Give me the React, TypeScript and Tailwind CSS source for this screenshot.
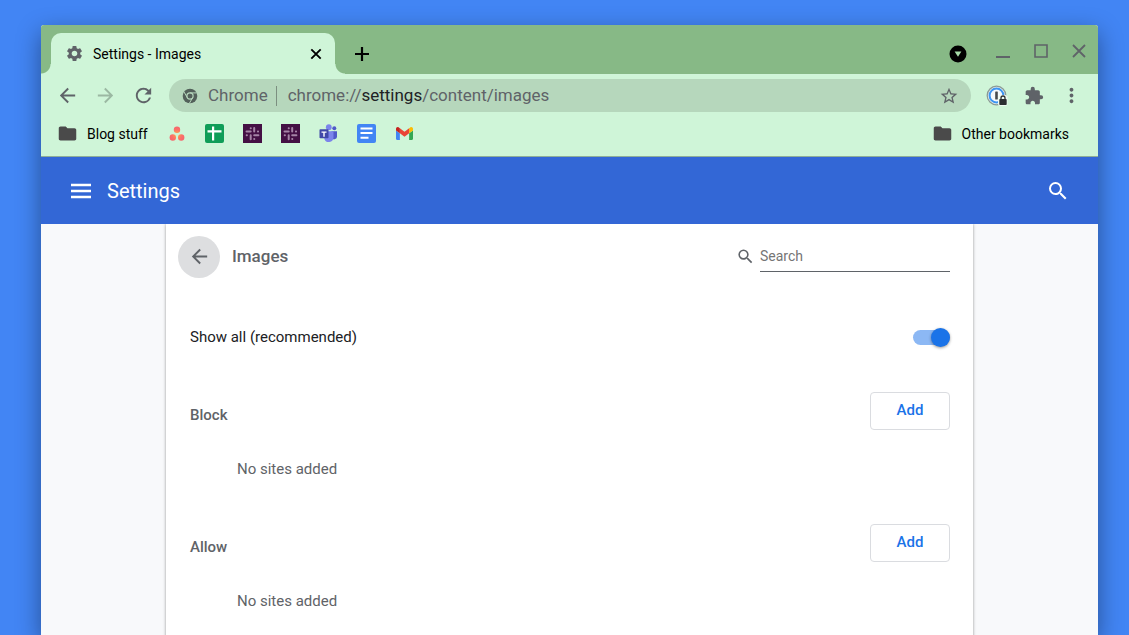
import type { ReactNode } from 'react';
import {
  MdArrowBack,
  MdArrowForward,
  MdExtension,
  MdFolder,
  MdMenu,
  MdMoreVert,
  MdRefresh,
  MdSearch,
  MdSettings,
  MdStarBorder,
} from 'react-icons/md';

function AsanaIcon() {
  return (
    <svg viewBox="0 0 16 16" className="size-4">
      <defs>
        <radialGradient id="asana" gradientUnits="userSpaceOnUse" cx="8" cy="8.5" r="8.5">
          <stop offset="0" stopColor="#ffb040" />
          <stop offset="0.55" stopColor="#fb7268" />
          <stop offset="1" stopColor="#f5636e" />
        </radialGradient>
      </defs>
      <g fill="url(#asana)">
        <circle cx="8" cy="3.800" r="3.2" />
        <circle cx="3.800" cy="11.500" r="3.2" />
        <circle cx="12.200" cy="11.500" r="3.2" />
      </g>
    </svg>
  );
}

function SheetsIcon() {
  return (
    <svg viewBox="0 0 19 19" className="size-[19px]">
      <rect width="19" height="19" rx="2" fill="#0f9d58" />
      <path d="M7 2.5h2.2v3.8H16.5v2.2H9.200v8H7v-8H2.500V6.300H7z" fill="#fff" />
    </svg>
  );
}

function SlackIcon() {
  return (
    <svg viewBox="0 0 19 19" className="size-[19px]">
      <rect width="19" height="19" fill="#441044" />
      <g stroke="#a584a6" strokeWidth="2" strokeLinecap="round">
        <path d="M7.700 4.200h.1M3.500 7.600h4.200" />
        <path d="M11.200 3.900v3.700M14.900 7.600h.2" />
        <path d="M11.200 11.300h4.200M11.200 15h.1" />
        <path d="M7.700 11.300v3.900M3.700 11.300h.2" />
      </g>
    </svg>
  );
}

function TeamsIcon() {
  return (
    <svg viewBox="0 0 19 19" className="size-[19px]">
      <circle cx="15.300" cy="4.300" r="2" fill="#5059c9" />
      <path d="M12.500 7.200H18v5.200a3 3 0 0 1-5 2.200z" fill="#5059c9" />
      <circle cx="9.800" cy="3.200" r="2.900" fill="#7b83eb" />
      <path d="M6 7.200h8.500v6.300a4.700 4.700 0 0 1-9.200 1.200z" fill="#7b83eb" />
      <rect x="0.500" y="5.300" width="9" height="9" rx="0.800" fill="#4048a8" />
      <path d="M2.500 7.400h5v1.400H5.700v4H4.300v-4H2.500z" fill="#fff" />
    </svg>
  );
}

function DocsIcon() {
  return (
    <svg viewBox="0 0 19 19" className="size-[19px]">
      <rect width="19" height="19" rx="2" fill="#4285f4" />
      <path d="M3.500 3.500h12v2h-12zM3.500 8h12v2h-12zM3.500 12.800h8v2h-8z" fill="#fff" />
    </svg>
  );
}

function GmailIcon() {
  return (
    <svg viewBox="52 42 88 66" className="h-[13px] w-[17px]">
      <path fill="#4285f4" d="M58 108h14V74L52 59v43c0 3.320 2.690 6 6 6" />
      <path fill="#34a853" d="M120 108h14c3.320 0 6-2.690 6-6V59l-20 15" />
      <path fill="#fbbc04" d="M120 48v26l20-15v-8c0-7.420-8.470-11.650-14.400-7.200" />
      <path fill="#ea4335" d="M72 74V48l24 18 24-18v26L96 92" />
      <path fill="#c5221f" d="M52 51v8l20 15V48l-5.600-4.200c-5.940-4.450-14.400-.22-14.400 7.200" />
    </svg>
  );
}

function ChromeIcon() {
  return (
    <svg viewBox="0 0 16 16" className="size-4">
      <circle cx="8" cy="8" r="7.300" fill="#53605a" />
      <g stroke="#b6d7bc" fill="none">
        <circle cx="8" cy="8" r="3.100" strokeWidth="1.200" />
        <path d="M8 4.900h6.800M5.300 9.600L1.900 3.700M10.700 9.600L7.300 15.400" strokeWidth="1" />
      </g>
    </svg>
  );
}

function PasswordIcon() {
  return (
    <svg viewBox="0 0 22 22" className="size-[22px] shrink-0">
      <circle cx="10.500" cy="10.500" r="9.300" fill="#e8f3ee" stroke="#8c9b96" strokeWidth="1.300" />
      <circle cx="10.500" cy="10.500" r="6.900" fill="#f4f8fb" stroke="#3e96f3" strokeWidth="2" />
      <rect x="9.200" y="6.500" width="2.600" height="8" rx="0.600" fill="#46494d" />
      <rect x="12" y="10" width="9.500" height="11" rx="2.500" fill="#eefaf1" />
      <rect x="13.300" y="14" width="7.400" height="6" rx="0.800" fill="#2b2e31" />
      <path d="M15 14.500v-1.500a2 2 0 0 1 4 0v1.500" fill="none" stroke="#2b2e31" strokeWidth="1.300" />
    </svg>
  );
}

function IconButton({ label, children }: { label: string; children: ReactNode }) {
  return (
    <button type="button" aria-label={label} className="flex size-6 items-center justify-center">
      {children}
    </button>
  );
}

function TitleBar() {
  return (
    <div className="flex h-[49px] shrink-0 items-end bg-[#87b986] pl-2.5">
      <div className="relative flex h-[41px] w-[284px] items-center rounded-t-[10px] bg-[#cff5d8] pr-[7px] pl-[14px]">
        <span className="absolute bottom-0 -left-2.5 size-2.5 bg-[radial-gradient(circle_at_0_0,transparent_9px,#cff5d8_10px)]" />
        <span className="absolute -right-2.5 bottom-0 size-2.5 bg-[radial-gradient(circle_at_100%_0,transparent_9px,#cff5d8_10px)]" />
        <MdSettings className="size-[19px] text-[#5f6368]" />
        <span className="ml-[9px] flex-1 text-sm text-black">Settings - Images</span>
        <IconButton label="Close tab">
          <svg viewBox="0 0 12 12" className="size-3">
            <path d="M1.300 1.300l9.400 9.400M10.700 1.300L1.300 10.700" stroke="#000" strokeWidth="1.900" />
          </svg>
        </IconButton>
      </div>
      <div className="flex h-[41px] flex-1 items-center pr-[7px] pl-[15px]">
        <IconButton label="New tab">
          <svg viewBox="0 0 16 16" className="size-4">
            <path d="M8 1v14M1 8h14" stroke="#000" strokeWidth="2.200" />
          </svg>
        </IconButton>
        <div className="flex-1" />
        <IconButton label="Search tabs">
          <svg viewBox="0 0 18 18" className="size-[18px]">
            <circle cx="9" cy="9" r="8.500" />
            <path d="M5.600 6.600h6.800L9 11.800z" fill="#a6dca7" />
          </svg>
        </IconButton>
        <div className="mb-1.5 ml-[21px] flex gap-3.5 text-[#5f6368]">
          <IconButton label="Minimize">
            <svg viewBox="0 0 14 14" className="size-3.5">
              <path d="M0 13h14" stroke="currentColor" strokeWidth="2" />
            </svg>
          </IconButton>
          <IconButton label="Maximize">
            <svg viewBox="0 0 14 14" className="size-3.5">
              <path d="M1 1h12v12H1z" fill="none" stroke="currentColor" strokeWidth="1.600" />
            </svg>
          </IconButton>
          <IconButton label="Close window">
            <svg viewBox="0 0 14 14" className="size-3.5">
              <path d="M1 1l12 12M13 1L1 13" stroke="currentColor" strokeWidth="1.800" />
            </svg>
          </IconButton>
        </div>
      </div>
    </div>
  );
}

function Toolbar() {
  return (
    <div className="flex h-[43px] items-center pr-[15px] pl-3.5 text-[#5f6368]">
      <div className="flex gap-3.5">
        <IconButton label="Back">
          <MdArrowBack className="size-[23px]" />
        </IconButton>
        <IconButton label="Forward">
          <MdArrowForward className="size-[23px] text-[#9bb8a2]" />
        </IconButton>
        <IconButton label="Reload">
          <MdRefresh className="size-[23px]" />
        </IconButton>
      </div>
      <div className="ml-[14px] flex h-[33px] flex-1 items-center rounded-full bg-[#b6d7bc] pr-2.5 pl-[13px] text-[17px]">
        <ChromeIcon />
        <span className="ml-2.5">Chrome</span>
        <span className="mr-[11px] ml-2 h-5 w-px bg-[#7c8f80]" />
        <span className="flex-1">
          chrome://<span className="text-[#202124]">settings</span>/content/images
        </span>
        <IconButton label="Bookmark this page">
          <MdStarBorder className="size-5" />
        </IconButton>
      </div>
      <div className="ml-3.5 flex gap-[13px]">
        <IconButton label="Password manager">
          <PasswordIcon />
        </IconButton>
        <IconButton label="Extensions">
          <MdExtension className="size-5" />
        </IconButton>
        <IconButton label="More">
          <MdMoreVert className="size-[23px]" />
        </IconButton>
      </div>
    </div>
  );
}

const bookmarks = [
  { label: 'Asana', icon: <AsanaIcon /> },
  { label: 'Sheets', icon: <SheetsIcon /> },
  { label: 'Slack', icon: <SlackIcon /> },
  { label: 'Slack team', icon: <SlackIcon /> },
  { label: 'Teams', icon: <TeamsIcon /> },
  { label: 'Docs', icon: <DocsIcon /> },
  { label: 'Gmail', icon: <GmailIcon /> },
];

function FolderButton({ name }: { name: string }) {
  return (
    <button type="button" className="flex items-center gap-[9px] text-sm text-black">
      <MdFolder className="size-[21px] text-[#4a4a4a]" />
      {name}
    </button>
  );
}

function BookmarksBar() {
  return (
    <div className="flex h-10 items-center border-b border-[#8fae97] pr-[29px] pb-1.5 pl-4">
      <FolderButton name="Blog stuff" />
      <div className="ml-[17px] flex flex-1 gap-3.5">
        {bookmarks.map((b) => (
          <a key={b.label} href="#" aria-label={b.label} className="flex size-6 items-center justify-center">
            {b.icon}
          </a>
        ))}
      </div>
      <FolderButton name="Other bookmarks" />
    </div>
  );
}

function SiteSection({ title }: { title: string }) {
  return (
    <section className="mb-10">
      <div className="flex h-[38px] items-center justify-between">
        <h2 className="pt-2 text-[15px] font-medium text-[#5f6368]">{title}</h2>
        <button
          type="button"
          className="h-[38px] w-20 rounded border border-[#dadce0] pb-0.5 text-[15px] font-medium text-[#1a73e8]"
        >
          Add
        </button>
      </div>
      <p className="mt-6 pl-[47px] text-[15px] leading-[30px] text-[#5f6368]">No sites added</p>
    </section>
  );
}

function ImagesPage() {
  return (
    <div className="mx-[125px] flex-1 bg-white pr-[23px] pl-6 shadow-[0_0_3px_rgba(0,0,0,0.4)]">
      <div className="-ml-3 flex h-[65px] items-center">
        <button
          type="button"
          aria-label="Back"
          className="flex size-[42px] items-center justify-center rounded-full bg-[#dddee0] text-[#5f6368]"
        >
          <MdArrowBack className="size-[23px]" />
        </button>
        <h1 className="ml-3 flex-1 text-[17px] font-medium text-[#5f6368]">Images</h1>
        <label className="flex items-center text-[#5f6368]">
          <MdSearch className="mr-[5px] size-[19px]" />
          <input
            type="search"
            aria-label="Search"
            placeholder="Search"
            className="h-[30px] w-[190px] border-b border-[#5f6368] bg-transparent text-sm outline-none placeholder:text-[#757575]"
          />
        </label>
      </div>
      <label className="mt-8 mb-[39px] flex h-8 items-center justify-between text-[15px] text-[#202124]">
        Show all (recommended)
        <input
          type="checkbox"
          role="switch"
          defaultChecked
          className="relative h-[15px] w-[37px] appearance-none rounded-full bg-[#8cb8f4] before:absolute before:-top-0.5 before:right-0 before:size-[19px] before:rounded-full before:bg-[#1a73e8] before:shadow-[0_1px_3px_rgba(0,0,0,0.4)]"
        />
      </label>
      <SiteSection title="Block" />
      <SiteSection title="Allow" />
    </div>
  );
}

export default function App() {
  return (
    <div className="flex h-screen flex-col bg-[#4285f4] pt-[25px] pr-[31px] pl-[41px] font-['Roboto',sans-serif]">
      <div className="flex min-h-0 flex-1 flex-col overflow-hidden rounded-t-[3px] bg-[#f8f9fb] shadow-[0_8px_24px_rgba(0,0,0,0.4)]">
        <TitleBar />
        <div className="shrink-0 bg-[#cff5d8]">
          <Toolbar />
          <BookmarksBar />
        </div>
        <header className="z-10 flex h-[67px] shrink-0 items-center bg-[#3367d6] px-7 text-white">
          <IconButton label="Main menu">
            <svg viewBox="0 0 20 16" className="h-4 w-5 shrink-0">
              <path d="M0 2h20M0 8h20M0 14h20" stroke="currentColor" strokeWidth="2.400" />
            </svg>
          </IconButton>
          <span className="ml-3.5 flex-1 text-xl">Settings</span>
          <IconButton label="Search settings">
            <MdSearch className="size-6" />
          </IconButton>
        </header>
        <ImagesPage />
      </div>
    </div>
  );
}
